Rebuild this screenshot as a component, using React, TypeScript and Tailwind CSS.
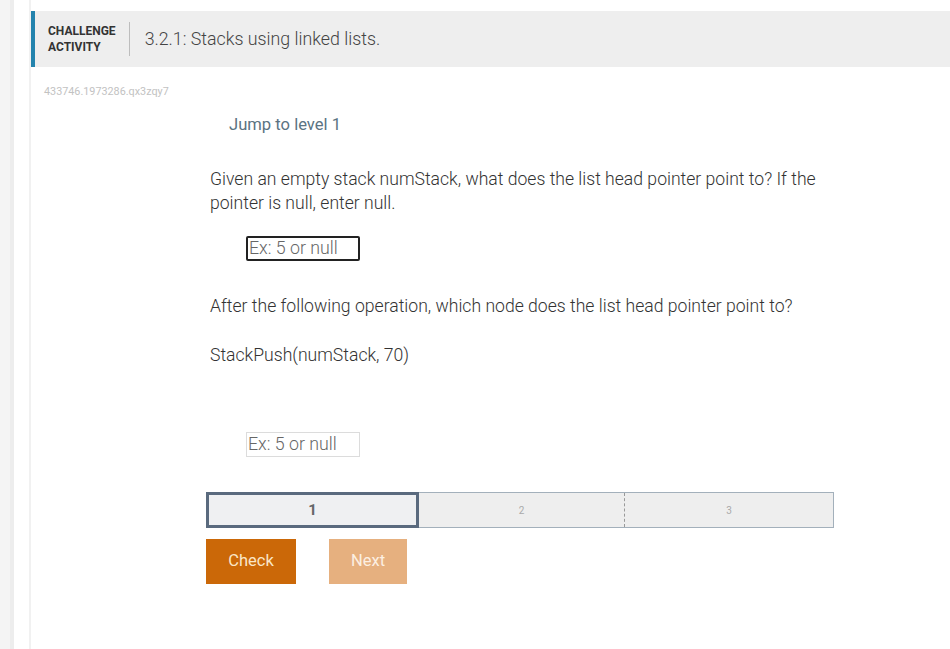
export default function App() {
  return (
    <div
      className="flex min-h-[649px] w-full bg-white"
      style={{ fontFamily: "Roboto, 'Noto Sans', sans-serif" }}
    >
      {/* left page gutter */}
      <div className="w-[10px] shrink-0 bg-[#f4f4f4]" />
      <div className="w-[4px] shrink-0 bg-[#ededed]" />
      <div className="w-[15px] shrink-0 bg-white" />
      <main className="min-w-0 flex-1 border-l-2 border-[#f1f1f1] pt-[11px]">
        <header className="flex h-[56px] items-center border-l-4 border-[#2383ad] bg-[#eeeeee] pl-[13px]">
          <div className="text-[12px] font-bold uppercase leading-[16px] text-[#333]">
            <div>Challenge</div>
            <div>Activity</div>
          </div>
          <div className="ml-[13px] h-[34px] w-px bg-[#bdbdbd]" />
          <h1 className="ml-[15px] text-[17.8px] font-light text-[#444]">
            3.2.1: Stacks using linked lists.
          </h1>
        </header>

        <div className="mt-[18px] pl-[13px] text-[10.8px] leading-[14px] text-[#c2c2c2]">
          433746.1973286.qx3zqy7
        </div>

        <div className="ml-[175px] w-[628px]">
          <div className="mt-[14px] pl-[23px] text-[16.6px] leading-[24px] text-[#5b7382]">
            Jump to level 1
          </div>

          <p className="mt-[30px] pl-[4px] pr-[5px] text-[17.6px] font-light leading-[24px] text-[#333]">
            Given an empty stack numStack, what does the list head pointer point to? If the
            pointer is null, enter null.
          </p>

          <div className="mt-[21px] ml-[40px] flex h-[25px] w-[114px] items-center rounded-[2px] border-2 border-[#222] px-[1px] text-[17.8px] font-light text-[#666]">
            Ex: 5 or null
          </div>

          <p className="mt-[33px] pl-[4px] text-[17.6px] font-light leading-[24px] text-[#333]">
            After the following operation, which node does the list head pointer point to?
          </p>

          <p className="mt-[25px] pl-[4px] text-[17.6px] font-light leading-[24px] text-[#333]">
            StackPush(numStack, 70)
          </p>

          <div className="mt-[65px] ml-[40px] flex h-[25px] w-[114px] items-center border border-[#dcdcdc] px-[1px] text-[17.8px] font-light text-[#666]">
            Ex: 5 or null
          </div>

          <div className="mt-[35px] flex h-[36px] border border-[#a3b0bb] bg-[#eeeeee]">
            <div className="-my-px -ml-px flex w-[213px] items-center justify-center border-[3px] border-[#5a6a7e] bg-[#eff0f2] text-[15px] font-bold text-[#666]">
              1
            </div>
            <div className="flex flex-1 items-center justify-center text-[10px] text-[#aaa]">
              2
            </div>
            <div className="flex w-[209px] items-center justify-center border-l border-dashed border-[#999] text-[10px] text-[#aaa]">
              3
            </div>
          </div>

          <div className="mt-[11px] flex gap-[33px]">
            <button className="flex h-[45px] w-[90px] items-center justify-center bg-[#cb6808] text-[16.5px] text-[#fae6c6]">
              Check
            </button>
            <button className="flex h-[45px] w-[78px] items-center justify-center bg-[#e6b07f] text-[16.5px] text-[#fcefe2]">
              Next
            </button>
          </div>
        </div>
      </main>
    </div>
  );
}
